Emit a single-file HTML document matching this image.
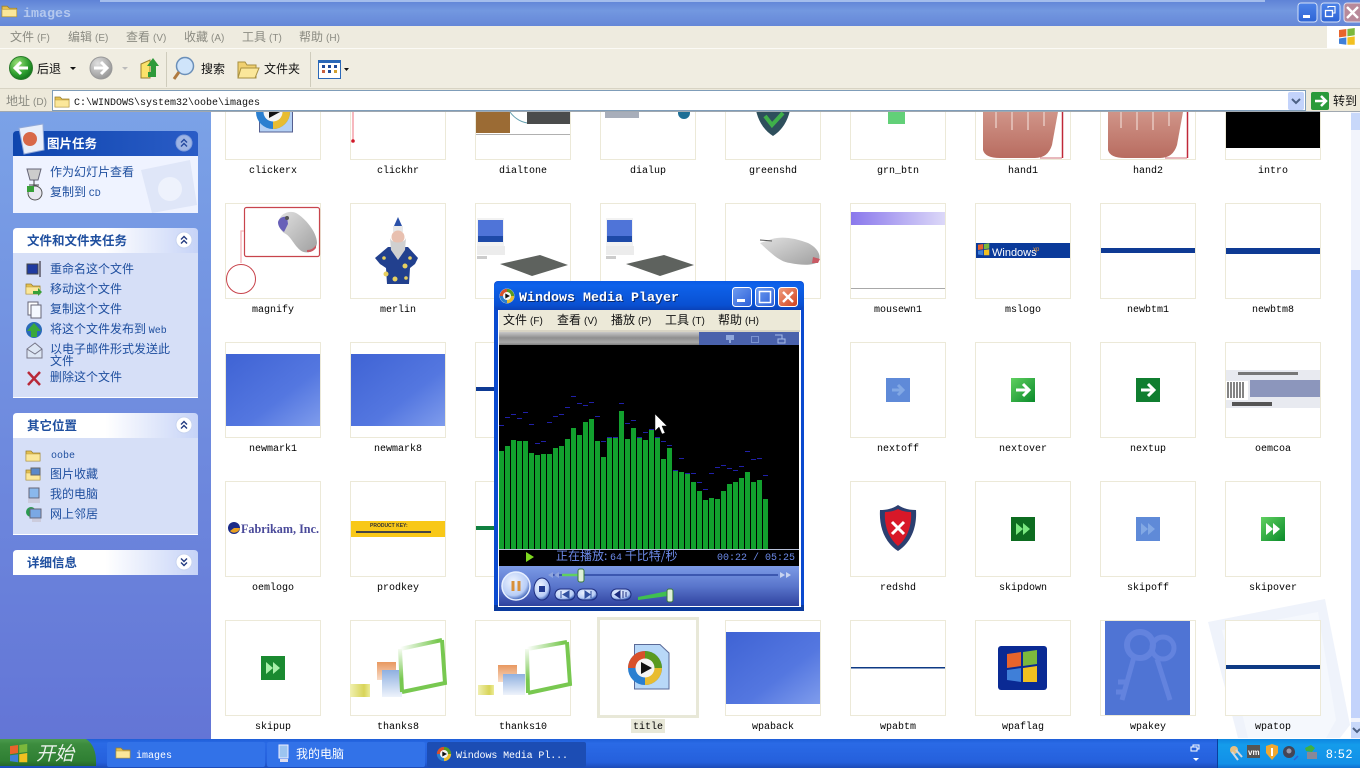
<!DOCTYPE html>
<html><head><meta charset="utf-8"><title>images</title>
<style>
html,body{margin:0;padding:0;width:1360px;height:768px;overflow:hidden;background:#fff}
svg{display:block;position:absolute;left:0;top:0}
text{white-space:pre}
.c{font:12px "WenQuanYi Zen Hei","Noto Sans CJK SC",sans-serif}
.b{font:bold 12.5px "WenQuanYi Zen Hei","Noto Sans CJK SC",sans-serif}
.m{font:10px "Liberation Mono","Noto Sans CJK SC",monospace}
.l{font:10px "Liberation Mono",monospace;text-anchor:middle;fill:#000}
.s{font-size:10px;font-family:"Liberation Mono",monospace}
.p{font-size:10px;font-family:"Liberation Sans",sans-serif}
.g{fill:#8b8b82}
.k{fill:#1f4f9f}
.w{fill:#111}
</style></head><body>
<svg width="1360" height="768" viewBox="0 0 1360 768" xmlns="http://www.w3.org/2000/svg">
<defs>
<linearGradient id="side" x1="0" y1="0" x2="0" y2="1"><stop offset="0" stop-color="#7ba2e7"/><stop offset="1" stop-color="#6375d6"/></linearGradient>
<linearGradient id="hd1" x1="0" y1="0" x2="1" y2="0"><stop offset="0" stop-color="#0e45ae"/><stop offset="1" stop-color="#2a5cc6"/></linearGradient>
<linearGradient id="hd2" x1="0" y1="0" x2="1" y2="0"><stop offset="0" stop-color="#fff"/><stop offset=".5" stop-color="#fff"/><stop offset="1" stop-color="#c6d3f7"/></linearGradient>
<linearGradient id="tb" x1="0" y1="0" x2="0" y2="1"><stop offset="0" stop-color="#5f83d6"/><stop offset=".4" stop-color="#7398e0"/><stop offset="1" stop-color="#6587d8"/></linearGradient>
<linearGradient id="task" x1="0" y1="0" x2="0" y2="1"><stop offset="0" stop-color="#1f5fd8"/><stop offset=".15" stop-color="#2a6ae6"/><stop offset=".8" stop-color="#2560dc"/><stop offset="1" stop-color="#1c4ab8"/></linearGradient>
<linearGradient id="tray" x1="0" y1="0" x2="0" y2="1"><stop offset="0" stop-color="#0e86e0"/><stop offset=".2" stop-color="#149ceb"/><stop offset=".85" stop-color="#1290e8"/><stop offset="1" stop-color="#0f6fd0"/></linearGradient>
<linearGradient id="st" x1="0" y1="0" x2="0" y2="1"><stop offset="0" stop-color="#4a9a4c"/><stop offset=".2" stop-color="#3c8c3e"/><stop offset=".8" stop-color="#2f7f33"/><stop offset="1" stop-color="#26682c"/></linearGradient>
<linearGradient id="btnb" x1="0" y1="0" x2="0" y2="1"><stop offset="0" stop-color="#4d83e8"/><stop offset="1" stop-color="#2d64d6"/></linearGradient>
<linearGradient id="ptb" x1="0" y1="0" x2="0" y2="1"><stop offset="0" stop-color="#0a5ae4"/><stop offset=".15" stop-color="#0e62ea"/><stop offset=".8" stop-color="#0950d2"/><stop offset="1" stop-color="#0a3fb4"/></linearGradient>
<linearGradient id="pmin" x1="0" y1="0" x2="1" y2="1"><stop offset="0" stop-color="#6e9cf0"/><stop offset="1" stop-color="#2c5fd8"/></linearGradient>
<linearGradient id="pcl" x1="0" y1="0" x2="1" y2="1"><stop offset="0" stop-color="#f0a080"/><stop offset="1" stop-color="#d0401c"/></linearGradient>
<linearGradient id="gray" x1="0" y1="0" x2="0" y2="1"><stop offset="0" stop-color="#c8c8c8"/><stop offset=".45" stop-color="#8f8f8f"/><stop offset=".8" stop-color="#a8a8a8"/><stop offset="1" stop-color="#7d7d7d"/></linearGradient>
<linearGradient id="ctl" x1="0" y1="0" x2="0" y2="1"><stop offset="0" stop-color="#7c9be6"/><stop offset=".5" stop-color="#5a76cc"/><stop offset="1" stop-color="#2f429f"/></linearGradient>
<linearGradient id="mark" x1="0" y1="0" x2="1" y2="1"><stop offset="0" stop-color="#3f63d4"/><stop offset=".6" stop-color="#5477e0"/><stop offset="1" stop-color="#7f9cec"/></linearGradient>
<linearGradient id="purp" x1="0" y1="0" x2="1" y2="0"><stop offset="0" stop-color="#8a78ec"/><stop offset="1" stop-color="#dcd8f8"/></linearGradient>
<linearGradient id="gb" x1="0" y1="0" x2="1" y2="1"><stop offset="0" stop-color="#60d060"/><stop offset="1" stop-color="#0a8a2a"/></linearGradient>
<linearGradient id="fh" x1="0" y1="0" x2="1" y2="0"><stop offset="0" stop-color="#fff"/><stop offset=".9" stop-color="#78c850"/></linearGradient>
<linearGradient id="fv" x1="0" y1="0" x2="0" y2="1"><stop offset="0" stop-color="#f4fbf0"/><stop offset=".7" stop-color="#78c850"/></linearGradient>
<linearGradient id="fb" x1="0" y1="0" x2="0" y2="1"><stop offset="0" stop-color="#8fb0e0"/><stop offset="1" stop-color="#eef3fb"/></linearGradient>
<linearGradient id="fo" x1="0" y1="0" x2="0" y2="1"><stop offset="0" stop-color="#e89860"/><stop offset="1" stop-color="#f8dcc8"/></linearGradient>
<linearGradient id="fy" x1="0" y1="0" x2="1" y2="0"><stop offset="0" stop-color="#f0f0b0"/><stop offset=".7" stop-color="#d8d458"/><stop offset="1" stop-color="#ecec98"/></linearGradient>
<linearGradient id="skin" x1="0" y1="0" x2="0" y2="1"><stop offset="0" stop-color="#d09488"/><stop offset="1" stop-color="#b86c60"/></linearGradient>
<linearGradient id="ms" x1="0" y1="0" x2="1" y2="1"><stop offset="0" stop-color="#e0e0e0"/><stop offset="1" stop-color="#a0a0a0"/></linearGradient>
<radialGradient id="ball" cx=".35" cy=".3" r=".8"><stop offset="0" stop-color="#9ee07a"/><stop offset=".6" stop-color="#2ea02e"/><stop offset="1" stop-color="#0b6a18"/></radialGradient>
<radialGradient id="ballg" cx=".35" cy=".3" r=".8"><stop offset="0" stop-color="#e0e0e0"/><stop offset="1" stop-color="#8f8f8f"/></radialGradient>
<radialGradient id="pz" cx=".4" cy=".35" r=".7"><stop offset="0" stop-color="#eef4ff"/><stop offset=".7" stop-color="#b8cdf6"/><stop offset="1" stop-color="#224aa8"/></radialGradient>
<g id="box"><rect x=".5" y=".5" width="95" height="95" fill="#fff" stroke="#ece9d8"/></g>
<g id="wmp"><circle r="17" fill="#2a7fd0"/><path d="M0 0V-17A17 17 0 0 1 17 0Z" fill="#5a9a20"/><path d="M0 0H17A17 17 0 0 1 0 17Z" fill="#e8bc30"/><path d="M0 0H-17A17 17 0 0 1 0 -17Z" fill="#d8502a"/><circle r="9.5" fill="#f4f4f4"/><path d="M-4-6 7 0-4 6Z" fill="#111"/></g>
<g id="flag"><path d="M0 1 7 0V7L0 8Z" fill="#e8642c"/><path d="M8 0 15-1V6L8 7Z" fill="#7cb83c"/><path d="M0 9 7 8V15L0 14Z" fill="#3f7fd8"/><path d="M8 8 15 7V15L8 15Z" fill="#f2c020"/></g>
<g id="fold"><path d="M0 3H5L7 5H14V13H0Z" fill="#e4c050" stroke="#9a8030" stroke-width=".8"/><path d="M0 6H14V13H0Z" fill="#fbe79a" stroke="#b89a40" stroke-width=".6"/></g>
<g id="chu"><circle r="8" fill="#fff" stroke="#c8d4f0"/><path d="M-3-0.5 0-3.5 3-0.5M-3 3.5 0 .5 3 3.5" fill="none" stroke="#223a80" stroke-width="1.4"/></g>
<g id="chd"><circle r="8" fill="#fff" stroke="#c8d4f0"/><path d="M-3-3.5 0-.5 3-3.5M-3 .5 0 3.5 3 .5" fill="none" stroke="#223a80" stroke-width="1.4"/></g>
<g id="mon"><rect x="0" y="0" width="27" height="28" fill="#f2f2f2"/><rect x="1" y="2" width="25" height="20" fill="#4f74d8"/><rect x="1" y="18" width="25" height="6" fill="#1e4aa8"/><rect x="0" y="28" width="28" height="9" fill="#ececec"/><rect x="0" y="38" width="10" height="3" fill="#ccc"/></g>
<g id="shield"><path d="M0-23C6-19 12-18 18-18 19-2 14 14 0 23-14 14-19-2-18-18-12-18-6-19 0-23Z"/></g>
</defs>

<!-- content -->
<rect x="211" y="112" width="1140" height="627" fill="#fff"/>
<path d="M1208 622 1325 599 1350 725 1340 738 1238 738Z" fill="#eff3fb"/>
<path d="M1222 630 1318 612 1336 720 1326 738 1248 738Z" fill="#f5f8fd"/>
<g>
<use href="#box" x="225" y="64"/><use href="#box" x="350" y="64"/><use href="#box" x="475" y="64"/><use href="#box" x="600" y="64"/><use href="#box" x="725" y="64"/><use href="#box" x="850" y="64"/><use href="#box" x="975" y="64"/><use href="#box" x="1100" y="64"/><use href="#box" x="1225" y="64"/>
<use href="#box" x="225" y="203"/><use href="#box" x="350" y="203"/><use href="#box" x="475" y="203"/><use href="#box" x="600" y="203"/><use href="#box" x="725" y="203"/><use href="#box" x="850" y="203"/><use href="#box" x="975" y="203"/><use href="#box" x="1100" y="203"/><use href="#box" x="1225" y="203"/>
<use href="#box" x="225" y="342"/><use href="#box" x="350" y="342"/><use href="#box" x="475" y="342"/><use href="#box" x="850" y="342"/><use href="#box" x="975" y="342"/><use href="#box" x="1100" y="342"/><use href="#box" x="1225" y="342"/>
<use href="#box" x="225" y="481"/><use href="#box" x="350" y="481"/><use href="#box" x="475" y="481"/><use href="#box" x="850" y="481"/><use href="#box" x="975" y="481"/><use href="#box" x="1100" y="481"/><use href="#box" x="1225" y="481"/>
<use href="#box" x="225" y="620"/><use href="#box" x="350" y="620"/><use href="#box" x="475" y="620"/><use href="#box" x="725" y="620"/><use href="#box" x="850" y="620"/><use href="#box" x="975" y="620"/><use href="#box" x="1100" y="620"/><use href="#box" x="1225" y="620"/>
</g>
<rect x="598.5" y="618.5" width="99" height="98" fill="#fff" stroke="#e8e8d8" stroke-width="3"/>

<!-- row 0 thumbs -->
<rect x="259.5" y="100" width="33" height="32" fill="#b4d0f4" stroke="#555f90"/><use href="#wmp" transform="translate(273 112)"/>
<path d="M353 112V141" stroke="#f4a0a8" stroke-width="1.5"/><circle cx="353" cy="141" r="1.8" fill="#d01828"/>
<rect x="476" y="112" width="34" height="21" fill="#9b6b34"/><rect x="476" y="134" width="94" height="1" fill="#b0b0b0"/><path d="M510 112C520 126 540 128 552 112" fill="none" stroke="#64a0b0"/><rect x="527" y="112" width="43" height="12" fill="#4a4c4c"/>
<rect x="605" y="112" width="34" height="6" fill="#a8aeba"/><circle cx="684" cy="113" r="6" fill="#1e6f96"/>
<use href="#shield" transform="translate(773 113)" fill="#2e4f5c"/><path d="M765 116 772 125 783 113" fill="none" stroke="#3fb04a" stroke-width="4"/>
<rect x="888" y="112" width="17" height="12" fill="#62d078"/>
<path d="M983 112V150Q985 158 1000 158H1035Q1048 158 1052 145L1058 112Z" fill="url(#skin)"/><path d="M996 112V128M1012 112V130M1028 112V130M1044 112V126" stroke="#e8c8c0" stroke-width="1.5"/><path d="M1062.5 112V158" stroke="#c02838" stroke-width="1.5"/><path d="M1040 158H1062" stroke="#d07078"/>
<path d="M1108 112V150Q1110 158 1125 158H1160Q1173 158 1177 145L1183 112Z" fill="url(#skin)"/><path d="M1121 112V128M1137 112V130M1153 112V130M1169 112V126" stroke="#e8c8c0" stroke-width="1.5"/><path d="M1187.5 112V158" stroke="#c02838" stroke-width="1.5"/><path d="M1165 158H1187" stroke="#d07078"/>
<rect x="1226" y="112" width="94" height="36" fill="#000"/>

<!-- row 1 thumbs -->
<rect x="244.5" y="207.5" width="75" height="49" rx="2" fill="#fff" stroke="#c8444c" stroke-width="1.2"/>
<path d="M241 263V231H244" fill="none" stroke="#f4b4b8" stroke-width="1.3"/><circle cx="241" cy="279" r="14.5" fill="#fff" stroke="#c8444c" stroke-width="1"/>
<path d="M279 220C281 213 290 210 296 213 305 218 317 232 317 243 316 252 306 255 300 250 293 244 291 236 284 233 280 230 278 225 279 220Z" fill="url(#ms)"/><path d="M278 222C279 218 283 216 287 217L288 224 284 232C280 229 278 226 278 222Z" fill="#6860b8"/><circle cx="287" cy="218" r="2" fill="#555"/><path d="M307 250Q313 250 316 245L316 248Q312 253 307 252Z" fill="#c85a64"/>
<path d="M398 217 402 226H394Z" fill="#2a50a8"/><rect x="393" y="226" width="10" height="6" fill="#e8e8e8"/><path d="M375 258 388 247H408L418 258 415 264 410 268 409 284H387L386 268 380 264Z" fill="#22408e"/><circle cx="398" cy="237" r="6.500" fill="#e8c0b0"/><path d="M390 238C392 244 404 244 406 238L405 250 398 260 391 250Z" fill="#d0d0d0"/><circle cx="386" cy="274" r="2.500" fill="#e8d060"/><circle cx="405" cy="266" r="2.500" fill="#e8d060"/><circle cx="395" cy="279" r="2.500" fill="#e8d060"/><circle cx="384" cy="258" r="1.800" fill="#e8d060"/><circle cx="410" cy="258" r="1.800" fill="#e8d060"/><circle cx="406" cy="278" r="1.800" fill="#e8d060"/>
<use href="#mon" transform="translate(477 218)"/><path d="M500 264 540 255 568 265 532 276Z" fill="#5e625e"/>
<use href="#mon" transform="translate(606 218)"/><path d="M626 264 664 255 694 265 660 276Z" fill="#5e625e"/>
<path d="M760 243 772 239C782 236 795 238 808 243 818 248 822 256 818 262 812 266 800 265 790 263 780 262 772 254 760 243Z" fill="url(#ms)"/><path d="M760 240 772 241" stroke="#555"/><path d="M813 257 820 259 818 263 812 263Z" fill="#c85a64"/>
<rect x="851" y="212" width="94" height="13" fill="url(#purp)"/><rect x="851" y="288" width="94" height="1" fill="#a8a8a8"/>
<rect x="976" y="243" width="94" height="15" fill="#0a3a9a"/><use href="#flag" transform="translate(978 244) scale(.75)"/><text x="992" y="256" font-family="Liberation Sans" font-size="11" fill="#fff">Windows</text><text x="1033" y="251" font-family="Liberation Sans" font-size="6" fill="#f0a040">xp</text>
<rect x="1101" y="248" width="94" height="5" fill="#0e3a94"/>
<rect x="1226" y="248" width="94" height="6" fill="#0e3a94"/>

<!-- row 2 -->
<rect x="226" y="354" width="94" height="72" fill="url(#mark)"/>
<rect x="351" y="354" width="94" height="72" fill="url(#mark)"/>
<rect x="476" y="387" width="20" height="4" fill="#0e3a94"/>
<rect x="886" y="378" width="24" height="24" fill="#5f8ad8"/><path d="M892 390H902M898 385 903 390 898 395" fill="none" stroke="#82a8e4" stroke-width="3"/>
<rect x="1011" y="378" width="24" height="24" fill="url(#gb)"/><path d="M1016 390H1027M1023 384 1029 390 1023 396" fill="none" stroke="#fff" stroke-width="3"/>
<rect x="1136" y="378" width="24" height="24" fill="#107e30"/><path d="M1141 390H1152M1148 384 1154 390 1148 396" fill="none" stroke="#fff" stroke-width="3"/>
<rect x="1226" y="370" width="94" height="38" fill="#e8eaf0"/><rect x="1250" y="380" width="70" height="17" fill="#8c96bc"/><rect x="1226" y="381" width="22" height="19" fill="#fff"/><path d="M1228 382V398M1231 382V398M1234 382V398M1237 382V398M1240 382V398M1243 382V398" stroke="#333" stroke-width="1.2"/><rect x="1238" y="372" width="60" height="3" fill="#777"/><rect x="1232" y="402" width="40" height="4" fill="#555"/>

<!-- row 3 -->
<circle cx="234" cy="528" r="6" fill="#1a2a88"/><path d="M230 531A6 6 0 0 0 240 528L234 528Z" fill="#e8a020"/>
<text x="241" y="533" font-family="Liberation Serif" font-size="13" font-weight="bold" fill="#4a4a9a" textLength="78" lengthAdjust="spacingAndGlyphs">Fabrikam, Inc.</text>
<rect x="351" y="521" width="94" height="16" fill="#f8c818"/><text x="370" y="527" font-family="Liberation Sans" font-size="5" font-weight="bold" fill="#333">PRODUCT KEY:</text><rect x="356" y="531" width="75" height="2" fill="#444"/>
<rect x="476" y="526" width="20" height="4" fill="#108040"/>
<use href="#shield" transform="translate(898 528)" fill="#2b3f70"/><path d="M898 509C902 511 906 512 911 512 912 524 908 538 898 546 888 538 884 524 885 512 890 512 894 511 898 509Z" fill="#d81828"/><path d="M892 522 904 534M904 522 892 534" stroke="#fff" stroke-width="3"/>
<rect x="1011" y="517" width="24" height="24" fill="#0d6c20"/><path d="M1016 523 1023 529 1016 535ZM1023 523 1030 529 1023 535Z" fill="#7ae880"/>
<rect x="1136" y="517" width="24" height="24" fill="#5f8ad8"/><path d="M1141 523 1148 529 1141 535ZM1148 523 1155 529 1148 535Z" fill="#82a8e4"/>
<rect x="1261" y="517" width="24" height="24" fill="url(#gb)"/><path d="M1266 523 1273 529 1266 535ZM1273 523 1280 529 1273 535Z" fill="#fff"/>

<!-- row 4 -->
<rect x="261" y="656" width="24" height="24" fill="#1a8a30"/><path d="M266 662 273 668 266 674ZM273 662 280 668 273 674Z" fill="#a8f0a8"/>
<rect x="377" y="662" width="19" height="18" fill="url(#fo)"/><rect x="382" y="670" width="20" height="27" fill="url(#fb)"/><rect x="350" y="684" width="20" height="13" fill="url(#fy)"/>
<path d="M402 692 445 683 442 640" fill="none" stroke="#78c850" stroke-width="4"/><path d="M400 649 442 640" fill="none" stroke="url(#fh)" stroke-width="4"/><path d="M400 649 402 692" fill="none" stroke="url(#fv)" stroke-width="4"/>
<rect x="498" y="665" width="19" height="17" fill="url(#fo)"/><rect x="503" y="674" width="22" height="21" fill="url(#fb)"/><rect x="478" y="685" width="16" height="10" fill="url(#fy)"/>
<path d="M528 693 570 684 567 642" fill="none" stroke="#78c850" stroke-width="4"/><path d="M527 649 567 642" fill="none" stroke="url(#fh)" stroke-width="4"/><path d="M527 649 528 693" fill="none" stroke="url(#fv)" stroke-width="4"/>
<path d="M634.5 644.5H660L669 653V689H634.5Z" fill="#b8d8f8" stroke="#5a6a98"/><use href="#wmp" transform="translate(645 668)"/>
<rect x="726" y="632" width="94" height="72" fill="url(#mark)"/>
<rect x="851" y="667" width="94" height="1.5" fill="#0e3a84"/>
<rect x="998" y="646" width="49" height="44" rx="3" fill="#0a2a94"/><use href="#flag" transform="translate(1007 652) scale(2)"/>
<rect x="1105" y="621" width="85" height="94" fill="#4f74d4"/><circle cx="1140" cy="645" r="13" fill="none" stroke="#6383de" stroke-width="6"/><circle cx="1163" cy="648" r="11" fill="none" stroke="#6383de" stroke-width="5"/><path d="M1134 657 1122 700M1128 682H1118M1126 692H1116M1157 659 1170 700" stroke="#6383de" stroke-width="5"/>
<rect x="1226" y="665" width="94" height="4" fill="#0e3a84"/>

<!-- labels -->
<g transform="translate(0 -1)">
<text x="273" y="174" class="l">clickerx</text><text x="398" y="174" class="l">clickhr</text><text x="523" y="174" class="l">dialtone</text><text x="648" y="174" class="l">dialup</text><text x="773" y="174" class="l">greenshd</text><text x="898" y="174" class="l">grn_btn</text><text x="1023" y="174" class="l">hand1</text><text x="1148" y="174" class="l">hand2</text><text x="1273" y="174" class="l">intro</text>
<text x="273" y="313" class="l">magnify</text><text x="398" y="313" class="l">merlin</text><text x="898" y="313" class="l">mousewn1</text><text x="1023" y="313" class="l">mslogo</text><text x="1148" y="313" class="l">newbtm1</text><text x="1273" y="313" class="l">newbtm8</text>
<text x="273" y="452" class="l">newmark1</text><text x="398" y="452" class="l">newmark8</text><text x="898" y="452" class="l">nextoff</text><text x="1023" y="452" class="l">nextover</text><text x="1148" y="452" class="l">nextup</text><text x="1273" y="452" class="l">oemcoa</text>
<text x="273" y="591" class="l">oemlogo</text><text x="398" y="591" class="l">prodkey</text><text x="898" y="591" class="l">redshd</text><text x="1023" y="591" class="l">skipdown</text><text x="1148" y="591" class="l">skipoff</text><text x="1273" y="591" class="l">skipover</text>
<text x="273" y="730" class="l">skipup</text><text x="398" y="730" class="l">thanks8</text><text x="523" y="730" class="l">thanks10</text><rect x="631" y="720" width="34" height="14" fill="#e8e8d8"/><text x="648" y="730" class="l">title</text><text x="773" y="730" class="l">wpaback</text><text x="898" y="730" class="l">wpabtm</text><text x="1023" y="730" class="l">wpaflag</text><text x="1148" y="730" class="l">wpakey</text><text x="1273" y="730" class="l">wpatop</text>
</g>

<!-- scrollbar -->
<rect x="1351" y="112" width="9" height="627" fill="#f2f4fc"/>
<rect x="1351" y="270" width="9" height="448" fill="#c3d3fb"/>
<rect x="1351" y="113" width="9" height="17" fill="#c8d8fa"/>
<rect x="1351" y="722" width="9" height="16" fill="#c8d8fa"/>
<path d="M1353 728 1357 732 1360 729" fill="none" stroke="#4d6185" stroke-width="2"/>

<!-- sidebar -->
<rect x="0" y="112" width="211" height="627" fill="url(#side)"/>
<path d="M13 156V135Q13 131 17 131H194Q198 131 198 135V156Z" fill="url(#hd1)"/>
<rect x="13" y="156" width="185" height="57" fill="#eff3ff"/>
<path d="M141 170 190 160 197 205 152 213Z" fill="#dfe6f8"/><circle cx="170" cy="189" r="12" fill="#eef2fc"/>
<path d="M19 128 43 124 44 150 24 154Z" fill="#e8eefa" stroke="#90a8d8"/><circle cx="30" cy="139" r="7" fill="#d86848"/>
<text x="47" y="148" class="b" fill="#fff">图片任务</text>
<use href="#chu" transform="translate(184 143)" opacity=".55"/>
<text x="50" y="176" class="c k">作为幻灯片查看</text>
<text x="50" y="196" class="c k">复制到 <tspan class="s">CD</tspan></text>
<path d="M27 169H41L38 180H30Z" fill="#ccc" stroke="#667"/><path d="M34 180V185M29 185H39" stroke="#444"/>
<circle cx="35" cy="193" r="7" fill="#e8e8f0" stroke="#555"/><rect x="27" y="186" width="7" height="6" fill="#38a038"/>

<path d="M13 253V232Q13 228 17 228H194Q198 228 198 232V253Z" fill="url(#hd2)"/>
<rect x="13" y="253" width="185" height="145" fill="#d6dff7"/><rect x="13" y="397" width="185" height="1" fill="#fff"/>
<text x="27" y="245" class="b k">文件和文件夹任务</text>
<use href="#chu" transform="translate(184 240)"/>
<text x="50" y="273" class="c k">重命名这个文件</text>
<text x="50" y="293" class="c k">移动这个文件</text>
<text x="50" y="313" class="c k">复制这个文件</text>
<text x="50" y="333" class="c k">将这个文件发布到 <tspan class="s">Web</tspan></text>
<text x="50" y="353" class="c k">以电子邮件形式发送此</text>
<text x="50" y="365" class="c k">文件</text>
<text x="50" y="381" class="c k">删除这个文件</text>
<rect x="27" y="264" width="11" height="10" fill="#1e3aa0" stroke="#444"/><rect x="39" y="261" width="2" height="16" fill="#778"/>
<use href="#fold" transform="translate(26 281)"/><path d="M33 291H38V288L42 292 38 296V294H33Z" fill="#38a038"/>
<rect x="28" y="302" width="10" height="13" fill="#fff" stroke="#667"/><rect x="31" y="305" width="10" height="13" fill="#f4f8ff" stroke="#667"/>
<circle cx="34" cy="330" r="8" fill="#2a6ab8"/><path d="M34 323 41 331H37V337H31V331H27Z" fill="#3aa83a"/>
<path d="M27 349 35 343 42 349V358H27Z" fill="#dde6f4" stroke="#778"/><path d="M27 349 35 354 42 349" fill="none" stroke="#778"/>
<path d="M28 372 40 385M40 372 28 385" stroke="#b82838" stroke-width="2.5"/>

<path d="M13 438V417Q13 413 17 413H194Q198 413 198 417V438Z" fill="url(#hd2)"/>
<rect x="13" y="438" width="185" height="96" fill="#d6dff7"/><rect x="13" y="534" width="185" height="1" fill="#fff"/>
<text x="27" y="430" class="b k">其它位置</text>
<use href="#chu" transform="translate(184 425)"/>
<text x="51" y="458" class="m k">oobe</text>
<text x="50" y="478" class="c k">图片收藏</text>
<text x="50" y="498" class="c k">我的电脑</text>
<text x="50" y="518" class="c k">网上邻居</text>
<use href="#fold" transform="translate(26 448)"/>
<use href="#fold" transform="translate(26 467)"/><rect x="31" y="468" width="9" height="7" fill="#5a88c8" stroke="#666"/>
<rect x="29" y="488" width="10" height="10" fill="#8ab8ec" stroke="#667"/><rect x="28" y="499" width="12" height="4" fill="#ccd"/>
<circle cx="31" cy="512" r="5" fill="#2a9a50"/><rect x="30" y="509" width="11" height="9" fill="#7aa8e4" stroke="#667"/><rect x="32" y="519" width="9" height="3" fill="#ccd"/>

<path d="M13 575V554Q13 550 17 550H194Q198 550 198 554V575Z" fill="url(#hd2)"/>
<text x="27" y="567" class="b k">详细信息</text>
<use href="#chd" transform="translate(184 562)"/>

<!-- chrome -->
<rect x="0" y="0" width="1360" height="26" fill="url(#tb)"/>
<rect x="100" y="0" width="1165" height="2" fill="#a4bdec"/>
<use href="#fold" transform="translate(2 3) scale(1.05)"/>
<text x="23" y="17" font-family="Liberation Mono" font-weight="bold" font-size="13.33" fill="#b4c8ee">images</text>
<rect x="1298" y="3" width="19" height="19" rx="3" fill="url(#btnb)" stroke="#d4e0f8"/><rect x="1303" y="15" width="7" height="3" fill="#fff"/>
<rect x="1321" y="3" width="19" height="19" rx="3" fill="url(#btnb)" stroke="#d4e0f8"/><rect x="1325.5" y="10.5" width="7" height="6" fill="none" stroke="#fff" stroke-width="1.3"/><path d="M1328 8V6.5H1335V13H1333" fill="none" stroke="#fff" stroke-width="1.1"/>
<rect x="1344" y="3" width="19" height="19" rx="3" fill="#b88a9a" stroke="#dde"/><path d="M1347 7 1358 18M1358 7 1347 18" stroke="#fff" stroke-width="2.4"/>

<rect x="0" y="26" width="1360" height="23" fill="#eeebdf"/><rect x="0" y="48" width="1360" height="1" fill="#fbfaf5"/>
<text x="10" y="41" class="c g">文件<tspan class="p" dx="3">(F)</tspan></text>
<text x="68" y="41" class="c g">编辑<tspan class="p" dx="3">(E)</tspan></text>
<text x="126" y="41" class="c g">查看<tspan class="p" dx="3">(V)</tspan></text>
<text x="184" y="41" class="c g">收藏<tspan class="p" dx="3">(A)</tspan></text>
<text x="242" y="41" class="c g">工具<tspan class="p" dx="3">(T)</tspan></text>
<text x="299" y="41" class="c g">帮助<tspan class="p" dx="3">(H)</tspan></text>
<rect x="1327" y="26" width="33" height="22" fill="#fff"/><use href="#flag" transform="translate(1339 29) scale(1.05)"/>

<rect x="0" y="49" width="1360" height="40" fill="#f0ede1"/><rect x="0" y="88" width="1360" height="1" fill="#d8d4c4"/>
<circle cx="21" cy="68" r="11.5" fill="url(#ball)" stroke="#2a7a2a"/><path d="M28 68H16M21 62 15 68 21 74" fill="none" stroke="#fff" stroke-width="3"/>
<text x="37" y="73" class="c w">后退</text>
<path d="M70 67H76L73 70Z" fill="#111"/>
<circle cx="101" cy="68" r="11" fill="url(#ballg)" stroke="#999"/><path d="M94 68H106M101 62 107 68 101 74" fill="none" stroke="#fff" stroke-width="3"/>
<path d="M122 67H128L125 70Z" fill="#bbb"/>
<path d="M141 64 150 60V78H141Z" fill="#fbe26a" stroke="#988030"/><path d="M148 77H156V66H159L153 58 147 66H151V72H148Z" fill="#2e9a3a"/>
<rect x="166" y="52" width="1" height="35" fill="#cfccbc"/>
<circle cx="185" cy="66" r="8.5" fill="#cfe4fa" stroke="#6b8fb8" stroke-width="1.5"/><path d="M179 72 174 79" stroke="#b07a40" stroke-width="3"/>
<text x="201" y="73" class="c w">搜索</text>
<path d="M238 62H245L247 65H256V78H238Z" fill="#f0d070" stroke="#a89040"/><path d="M241 68H259L255 78H238Z" fill="#fbe79a" stroke="#a89040"/>
<text x="264" y="73" class="c w">文件夹</text>
<rect x="310" y="52" width="1" height="35" fill="#cfccbc"/>
<rect x="318.5" y="60.5" width="22" height="18" fill="#fff" stroke="#2a68b8"/><rect x="318" y="60" width="23" height="3" fill="#2a68b8"/>
<path d="M322 65h3v3h-3zM328 65h3v3h-3zM334 65h3v3h-3z" fill="#1e4a9a"/><path d="M322 70h3v3h-3z" fill="#c86040"/><path d="M328 70h3v3h-3z" fill="#1e4a9a"/><path d="M334 70h3v3h-3z" fill="#d0a030"/>
<path d="M344 68H349L346.5 71Z" fill="#111"/>

<rect x="0" y="89" width="1360" height="23" fill="#ede9da"/>
<text x="6" y="105" class="c g">地址<tspan class="p" dx="3">(D)</tspan></text>
<rect x="52.5" y="90.5" width="1253" height="20" fill="#fff" stroke="#7f9db9"/>
<use href="#fold" transform="translate(55 94)"/>
<text x="74" y="105" class="m" fill="#111">C:\WINDOWS\system32\oobe\images</text>
<rect x="1288" y="92" width="16" height="18" rx="2" fill="#c3d3fb"/><path d="M1292 99 1296 103 1300 99" fill="none" stroke="#4d6185" stroke-width="2"/>
<rect x="1311" y="92" width="18" height="18" rx="2" fill="#2a9a3a"/><path d="M1315 101H1325M1321 96 1326 101 1321 106" fill="none" stroke="#fff" stroke-width="2.5"/>
<text x="1333" y="105" class="c w">转到</text>
<rect x="0" y="111" width="1360" height="1" fill="#a0a8b0"/>

<!-- player -->
<rect x="494" y="281" width="310" height="330" rx="4" fill="#0a4ad0"/>
<rect x="494" y="281" width="310" height="30" rx="6" fill="url(#ptb)"/>
<rect x="494" y="605" width="310" height="6" fill="#0a3a9e"/>
<rect x="498" y="310" width="303" height="297" fill="#fff"/>
<circle cx="507" cy="296" r="7.5" fill="#d8d8d8"/><use href="#wmp" transform="translate(507 296) scale(.42)"/>
<text x="519" y="301" font-family="Liberation Mono" font-weight="bold" font-size="13.33" fill="#0a2a70" transform="translate(1 1)">Windows Media Player</text>
<text x="519" y="301" font-family="Liberation Mono" font-weight="bold" font-size="13.33" fill="#fff">Windows Media Player</text>
<rect x="732.5" y="287.5" width="19" height="19" rx="3" fill="url(#pmin)" stroke="#fff"/><rect x="737" y="299" width="8" height="3" fill="#fff"/>
<rect x="755.5" y="287.5" width="19" height="19" rx="3" fill="url(#pmin)" stroke="#fff"/><rect x="759.5" y="291.5" width="11" height="11" fill="none" stroke="#fff" stroke-width="1.5"/>
<rect x="778.5" y="287.5" width="19" height="19" rx="3" fill="url(#pcl)" stroke="#fff"/><path d="M783 292 793 302M793 292 783 302" stroke="#fff" stroke-width="2.4"/>
<rect x="499" y="310" width="301" height="21" fill="#ece9d8"/><rect x="499" y="330" width="301" height="2" fill="#d8d4c4"/>
<text x="503" y="324" class="c w">文件<tspan class="p" dx="3">(F)</tspan></text>
<text x="557" y="324" class="c w">查看<tspan class="p" dx="3">(V)</tspan></text>
<text x="611" y="324" class="c w">播放<tspan class="p" dx="3">(P)</tspan></text>
<text x="665" y="324" class="c w">工具<tspan class="p" dx="3">(T)</tspan></text>
<text x="718" y="324" class="c w">帮助<tspan class="p" dx="3">(H)</tspan></text>
<rect x="499" y="332" width="200" height="13" fill="url(#gray)"/>
<rect x="699" y="332" width="100" height="13" fill="#4a62ac"/>
<path d="M726 335H734V340H731V343H729V340H726Z" fill="#90a8dc"/><rect x="751.5" y="336.5" width="7" height="6" fill="none" stroke="#7a92d0"/><path d="M775 335H782V339M778 339H785V343H778Z" fill="none" stroke="#a8bce8"/>
<rect x="499" y="345" width="300" height="205" fill="#000"/>
<path fill="none" stroke="#12a02e" stroke-width="5" d="M501.5 451V549M507.5 446V549M513.5 440V549M519.5 441V549M525.5 441V549M531.5 453V549M537.5 455V549M543.5 454V549M549.5 454V549M555.5 448V549M561.5 446V549M567.5 439V549M573.5 428V549M579.5 435V549M585.5 422V549M591.5 419V549M597.5 441V549M603.5 457V549M609.5 437V549M615.5 437V549M621.5 411V549M627.5 439V549M633.5 428V549M639.5 437V549M645.5 440V549M651.5 430V549M657.5 438V549M663.5 459V549M669.5 448V549M675.5 471V549M681.5 472V549M687.5 474V549M693.5 482V549M699.5 491V549M705.5 500V549M711.5 498V549M717.5 499V549M723.5 491V549M729.5 484V549M735.5 482V549M741.5 478V549M747.5 472V549M753.5 482V549M759.5 480V549M765.5 499V549"/>
<path fill="none" stroke="#2020a8" stroke-width="1" d="M499 425.5h5M505 417.5h5M511 414.5h5M517 418.5h5M523 412.5h5M529 424.5h5M535 443.5h5M541 441.5h5M547 422.5h5M553 416.5h5M559 414.5h5M565 407.5h5M571 396.5h5M577 403.5h5M583 405.5h5M589 402.5h5M595 416.5h5M601 441.5h5M607 437.5h5M613 437.5h5M619 403.5h5M625 423.5h5M631 420.5h5M637 437.5h5M643 432.5h5M649 429.5h5M655 437.5h5M661 441.5h5M667 445.5h5M673 470.5h5M679 458.5h5M685 473.5h5M691 473.5h5M697 482.5h5M703 489.5h5M709 473.5h5M715 467.5h5M721 465.5h5M727 468.5h5M733 470.5h5M739 466.5h5M745 451.5h5M751 459.5h5M757 458.5h5M763 475.5h5"/>
<rect x="499" y="549" width="300" height="1" fill="#b8c0d8"/>
<rect x="499" y="550" width="300" height="16" fill="#000"/>
<path d="M526 552 534 557 526 562Z" fill="#7fd820"/>
<text x="556" y="560" class="c" fill="#6c8ae8">正在播放: <tspan class="s">64</tspan> 千比特/秒</text>
<text x="717" y="560" font-family="Liberation Mono" font-size="10" fill="#6c8ae8">00:22 / 05:25</text>
<rect x="499" y="566" width="300" height="40" fill="url(#ctl)"/>
<path d="M552 575H778" stroke="#3c58b0" stroke-width="2"/><path d="M562 575H581" stroke="#60d060" stroke-width="2.5"/>
<rect x="578" y="569" width="6" height="13" rx="2" fill="#dff0d8" stroke="#3a7a3a"/>
<path d="M548 575 553 572V578ZM554 575 559 572V578Z" fill="#8ea4dc"/><path d="M780 572 785 575 780 578ZM786 572 791 575 786 578Z" fill="#c8d4f0"/>
<circle cx="516" cy="586" r="14" fill="url(#pz)" stroke="#e8f0ff" stroke-width="1.5"/><rect x="511.5" y="581" width="3" height="10" fill="#d8903a"/><rect x="517.5" y="581" width="3" height="10" fill="#d8903a"/>
<ellipse cx="542" cy="589" rx="8" ry="11" fill="url(#pz)" stroke="#1e2e80"/><rect x="539" y="586" width="6" height="6" fill="#223a90"/>
<rect x="555" y="589" width="20" height="11" rx="5.5" fill="url(#pz)" stroke="#1e2e80"/><path d="M561 591V598M569 591 563 594.5 569 598Z" fill="#3050a0" stroke="#3050a0"/>
<rect x="577" y="589" width="20" height="11" rx="5.5" fill="url(#pz)" stroke="#1e2e80"/><path d="M591 591V598M585 591 590 594.5 585 598Z" fill="#3050a0" stroke="#3050a0"/>
<rect x="611" y="589" width="20" height="11" rx="5.5" fill="url(#pz)" stroke="#1e2e80"/><path d="M615 594.5 620 591V598ZM623 591V598M626 592V597" fill="#1e2e80" stroke="#1e2e80"/>
<path d="M638 600 668 596V591L638 597Z" fill="#40c050"/>
<rect x="667" y="589" width="6" height="13" rx="2" fill="#dff0d8" stroke="#3a7a3a"/>
<path d="M655 414V431L659 427 662 434 665 433 662 426 667 426Z" fill="#fff" stroke="#111" stroke-width=".5"/>

<!-- taskbar -->
<rect x="0" y="739" width="1360" height="29" fill="url(#task)"/>
<path d="M0 739H86Q97 746 96 766H0Z" fill="url(#st)"/>
<use href="#flag" transform="translate(10 745) scale(1.15)"/>
<text x="36" y="760" font-family="WenQuanYi Zen Hei,Noto Sans CJK SC,sans-serif" font-size="19" font-style="italic" fill="#e8f0e8">开始</text>
<rect x="107" y="742" width="158" height="25" rx="2" fill="#3272e8"/>
<use href="#fold" transform="translate(116 745)"/>
<text x="136" y="758" class="m" fill="#fff">images</text>
<rect x="267" y="742" width="158" height="25" rx="2" fill="#3272e8"/>
<rect x="279" y="745" width="9" height="13" fill="#9cc4f0" stroke="#eef"/><rect x="280" y="759" width="8" height="3" fill="#dde"/>
<text x="296" y="758" class="c" fill="#fff">我的电脑</text>
<rect x="427" y="742" width="159" height="25" rx="2" fill="#1c4db4"/>
<use href="#wmp" transform="translate(444 754) scale(.42)"/>
<text x="456" y="758" class="m" fill="#fff" textLength="112">Windows Media Pl...</text>
<rect x="1193" y="745" width="6" height="4" fill="none" stroke="#fff"/><rect x="1191" y="747" width="6" height="4" fill="#2560dc" stroke="#fff"/>
<path d="M1193 758H1199L1196 761Z" fill="#fff"/>
<rect x="1217" y="739" width="143" height="29" fill="url(#tray)"/><rect x="1217" y="739" width="1" height="29" fill="#0a3f9c"/>
<circle cx="1234" cy="750" r="4" fill="#e8c080"/><path d="M1232 752 1238 760M1236 750 1242 757" stroke="#d0d8e0" stroke-width="2"/>
<rect x="1247" y="745" width="13" height="13" fill="#555"/><text x="1248" y="755" font-family="Liberation Sans" font-size="8" font-weight="bold" fill="#fff">vm</text>
<path d="M1266 746 1272 744 1278 746V753L1272 760 1266 753Z" fill="#f0a830"/><path d="M1272 748V756" stroke="#fff" stroke-width="2"/>
<circle cx="1289" cy="752" r="6" fill="#445"/><circle cx="1289" cy="751" r="2.5" fill="#99a"/><path d="M1294 760 1298 756" stroke="#3060d0" stroke-width="1.5"/>
<path d="M1305 748 1311 745 1315 748 1312 752 1306 751Z" fill="#40b040"/><rect x="1307" y="752" width="10" height="7" fill="#889"/>
<text x="1326" y="758" font-family="Liberation Sans" font-size="12" fill="#fff" letter-spacing="1">8:52</text>
</svg>
</body></html>
